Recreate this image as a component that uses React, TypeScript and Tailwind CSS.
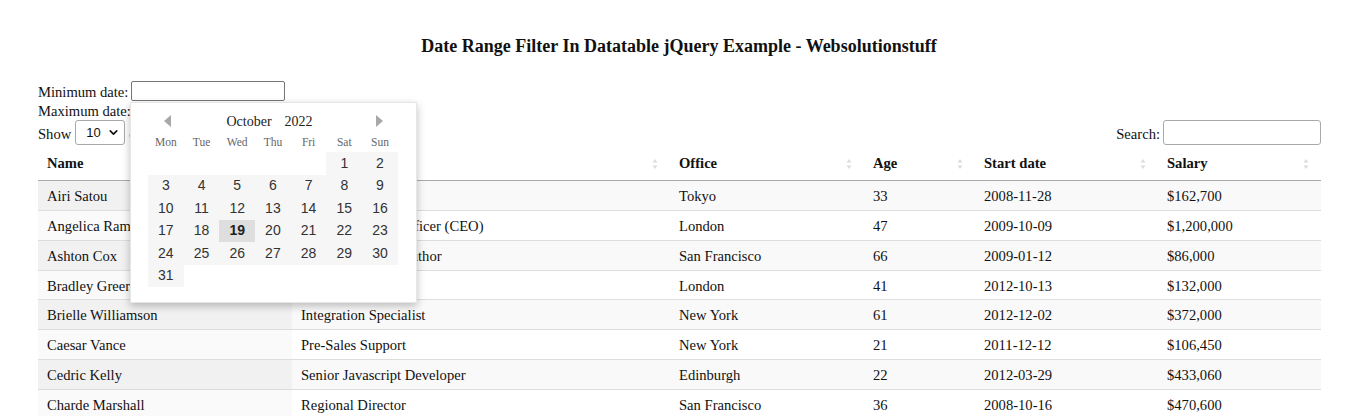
import { ChevronDown } from 'lucide-react';

const rows = [
  ['Airi Satou', 'Accountant', 'Tokyo', '33', '2008-11-28', '$162,700'],
  ['Angelica Ramos', 'Chief Executive Officer (CEO)', 'London', '47', '2009-10-09', '$1,200,000'],
  ['Ashton Cox', 'Junior Technical Author', 'San Francisco', '66', '2009-01-12', '$86,000'],
  ['Bradley Greer', 'Software Engineer', 'London', '41', '2012-10-13', '$132,000'],
  ['Brielle Williamson', 'Integration Specialist', 'New York', '61', '2012-12-02', '$372,000'],
  ['Caesar Vance', 'Pre-Sales Support', 'New York', '21', '2011-12-12', '$106,450'],
  ['Cedric Kelly', 'Senior Javascript Developer', 'Edinburgh', '22', '2012-03-29', '$433,060'],
  ['Charde Marshall', 'Regional Director', 'San Francisco', '36', '2008-10-16', '$470,600'],
];

const cols = [
  { name: 'Name', w: 'w-[254px]' },
  { name: 'Position', w: 'w-[378px]' },
  { name: 'Office', w: 'w-[194px]' },
  { name: 'Age', w: 'w-[111px]' },
  { name: 'Start date', w: 'w-[183px]' },
  { name: 'Salary', w: 'w-[163px]' },
];

function SortIcon() {
  return (
    <svg width="6" height="12" viewBox="0 0 6 12" className="absolute right-[12px] top-[12px]">
      <path d="M3 1 L5.5 4.5 L0.5 4.5 Z" fill="#dcdcdc" />
      <path d="M3 11 L5.5 7.5 L0.5 7.5 Z" fill="#dcdcdc" />
    </svg>
  );
}

const weeks: (number | null)[][] = [
  [null, null, null, null, null, 1, 2],
  [3, 4, 5, 6, 7, 8, 9],
  [10, 11, 12, 13, 14, 15, 16],
  [17, 18, 19, 20, 21, 22, 23],
  [24, 25, 26, 27, 28, 29, 30],
  [31, null, null, null, null, null, null],
];

function DatePicker() {
  return (
    <div className="absolute left-[130px] top-[102px] w-[287px] h-[201px] bg-white border border-[#e6e6e6] shadow-[0_3px_8px_rgba(0,0,0,0.25)] pl-[17px] pt-[8px]">
      <div className="relative h-[20px] w-[251px] flex items-center justify-center text-[14px] text-[#222]">
        <svg width="8" height="12" viewBox="0 0 8 12" className="absolute left-[16px] top-[4px]">
          <path d="M7 0 L7 12 L0 6 Z" fill="#a8a8a8" />
        </svg>
        <span className="pr-[1px]">October</span>
        <span className="ml-[12px] pr-[8px]">2022</span>
        <svg width="8" height="12" viewBox="0 0 8 12" className="absolute left-[228px] top-[4px]">
          <path d="M0 0 L0 12 L7 6 Z" fill="#a8a8a8" />
        </svg>
      </div>
      <div className="flex h-[21px] items-center pt-[2px] text-[11.5px] text-[#666]">
        {['Mon', 'Tue', 'Wed', 'Thu', 'Fri', 'Sat', 'Sun'].map((d) => (
          <div key={d} className="w-[35.7px] text-center">{d}</div>
        ))}
      </div>
      <div className="font-['Liberation_Sans',sans-serif] text-[14px] text-[#333]">
        {weeks.map((w, i) => (
          <div key={i} className="flex h-[22.5px]">
            {w.map((d, j) => (
              <div
                key={j}
                className={
                  'w-[35.7px] flex items-center justify-center ' +
                  (d === null ? '' : d === 19 ? 'bg-[#dedede] font-bold text-[#222]' : 'bg-[#f6f6f6]')
                }
              >
                {d}
              </div>
            ))}
          </div>
        ))}
      </div>
    </div>
  );
}

export default function App() {
  return (
    <div className="relative w-[1358px] h-[416px] overflow-hidden bg-white font-['Liberation_Serif',serif] text-[14.6px] text-[#111] pl-[38px] pr-[37px]">
      <h3 className="pt-[35px] h-[56px] text-center font-bold text-[18px] leading-[22px] -ml-[38px] -mr-[37px]">
        Date Range Filter In Datatable jQuery Example - Websolutionstuff
      </h3>
      <div className="mt-[25px] h-[20px] flex items-center">
        <span className="mr-[3px] pt-[4px]">Minimum date:</span>
        <input className="w-[154px] h-[20px] border border-[#767676] rounded-[2px]" />
      </div>
      <div className="h-[19px] flex items-center pt-[2px]">Maximum date:</div>
      <div className="h-[26px] flex items-center justify-between">
        <div className="flex items-center">
          <span className="mr-[4px] pt-[4px]">Show</span>
          <div className="w-[50px] h-[25px] border border-[#aaa] rounded-[3px] flex items-center pl-[10px] pr-[4px] font-['Liberation_Sans',sans-serif] text-[13px]">
            <span className="flex-1">10</span>
            <ChevronDown size={13} strokeWidth={3} />
          </div>
          <span className="ml-[4px] pt-[4px]">entries</span>
        </div>
        <div className="flex items-center">
          <span className="mr-[3px] pt-[4px]">Search:</span>
          <input className="w-[158px] h-[25px] border border-[#aaa] rounded-[3px]" />
        </div>
      </div>
      <div className="flex h-[35px] border-b border-[#aaa] font-bold">
        {cols.map((c) => (
          <div key={c.name} className={c.w + ' relative pl-[9px] pt-[2px] flex items-center'}>
            {c.name}
            <SortIcon />
          </div>
        ))}
      </div>
      {rows.map((r, i) => (
        <div key={r[0]} className={'flex h-[29.86px] border-b border-[#ddd] ' + (i % 2 === 0 ? 'bg-[#f9f9f9]' : 'bg-white')}>
          {r.map((v, j) => (
            <div
              key={j}
              className={
                cols[j].w +
                ' pl-[9px] pt-[3px] flex items-center ' +
                (j === 0 ? (i % 2 === 0 ? 'bg-[#f1f1f1]' : 'bg-[#fafafa]') : '')
              }
            >
              {v}
            </div>
          ))}
        </div>
      ))}
      <DatePicker />
    </div>
  );
}
